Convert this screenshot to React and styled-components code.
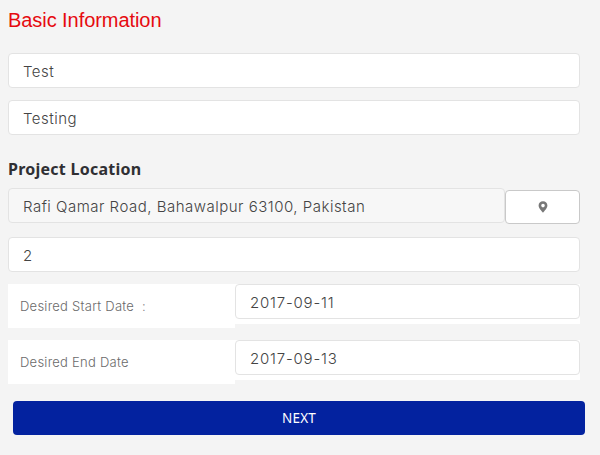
import React from "react";
import styled, { createGlobalStyle } from "styled-components";

const Global = createGlobalStyle`
  html, body { margin: 0; padding: 0; background: #f4f4f4; }
  * { box-sizing: border-box; }
`;

const Page = styled.div`
  width: 600px;
  height: 455px;
  overflow: hidden;
  padding: 8px 20px 0 8px;
  background: #f4f4f4;
  font-family: "Inter", sans-serif;
  display: flex;
  flex-direction: column;
`;

const Title = styled.h2`
  margin: 0 0 21px;
  height: 24px;
  font: 400 20px/24px "Liberation Sans", sans-serif;
  letter-spacing: -0.06px;
  color: #e60a0f;
`;

const Field = styled.div`
  height: 35px;
  padding: 1px 14px 0;
  display: flex;
  align-items: center;
  font-weight: 300;
  font-size: 15px;
  letter-spacing: 0.5px;
  color: #444;
  background: ${(p) => (p.$muted ? "#f7f7f7" : "#fff")};
  border: 1px solid #e3e3e3;
  border-radius: 4px;
`;

const Stack = styled.div`
  display: flex;
  flex-direction: column;
  gap: 12px;
`;

const Heading = styled.h3`
  margin: 24px 0 9px;
  height: 20px;
  font: 700 16px/20px "Noto Sans", sans-serif;
  letter-spacing: 0.25px;
  color: #2f2f33;
`;

const LocationRow = styled.div`
  display: flex;
  align-items: flex-start;
  margin-bottom: 13px;
`;

const LocationField = styled(Field)`
  flex: 1;
`;

const PinButton = styled.button`
  width: 75px;
  height: 34px;
  margin-top: 2px;
  padding: 0;
  display: flex;
  align-items: center;
  justify-content: center;
  background: #fff;
  border: 1px solid #c9c9c9;
  border-radius: 4px;
`;

const DateRow = styled.div`
  display: flex;
  align-items: flex-start;
  margin-top: 12px;
`;

const DateLabel = styled.div`
  width: 227px;
  height: 44px;
  padding: 0 0 0 12px;
  display: flex;
  align-items: center;
  font-weight: 300;
  font-size: 13px;
  letter-spacing: 0.25px;
  color: #6a6a6a;
  background: #fff;
`;

const DateWrap = styled.div`
  flex: 1;
  height: 40px;
  background: #fff;
`;

const DateField = styled(Field)`
  letter-spacing: 0.8px;
`;

const NextButton = styled.button`
  width: 572px;
  height: 34px;
  margin: 17px 0 0 5px;
  padding: 0;
  border: 0;
  border-radius: 4px;
  background: #03229f;
  color: #fff;
  font: 400 13.5px "Noto Sans", sans-serif;
  letter-spacing: 0.2px;
`;

const Pin = () => (
  <svg width="10" height="12" viewBox="0 0 10 12">
    <path
      fillRule="evenodd"
      d="M5 0.3C2.4 0.3 0.6 2.2 0.6 4.5 0.6 7.2 3.6 9.9 5 11.8 6.4 9.9 9.4 7.2 9.4 4.5 9.4 2.2 7.6 0.3 5 0.3ZM5 2.8A1.8 1.8 0 1 1 5 6.4 1.8 1.8 0 1 1 5 2.8Z"
      fill="#777"
    />
  </svg>
);

export default function App() {
  return (
    <Page>
      <Global />
      <Title>Basic Information</Title>
      <Stack>
        <Field>Test</Field>
        <Field>Testing</Field>
      </Stack>
      <Heading>Project Location</Heading>
      <LocationRow>
        <LocationField $muted>Rafi Qamar Road, Bahawalpur 63100, Pakistan</LocationField>
        <PinButton aria-label="Locate">
          <Pin />
        </PinButton>
      </LocationRow>
      <Field>2</Field>
      <DateRow>
        <DateLabel>Desired Start Date&nbsp;&nbsp;:</DateLabel>
        <DateWrap>
          <DateField>2017-09-11</DateField>
        </DateWrap>
      </DateRow>
      <DateRow>
        <DateLabel>Desired End Date</DateLabel>
        <DateWrap>
          <DateField>2017-09-13</DateField>
        </DateWrap>
      </DateRow>
      <NextButton>NEXT</NextButton>
    </Page>
  );
}
